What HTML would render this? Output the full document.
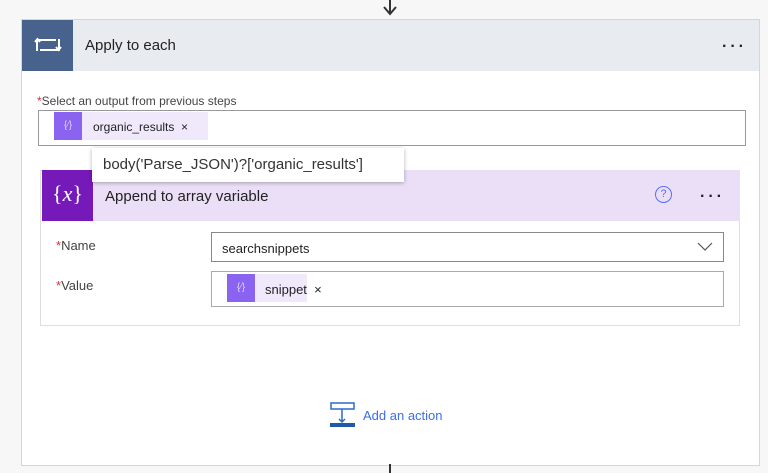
<!DOCTYPE html>
<html><head><style>
body{margin:0;width:768px;height:473px;background:#f7f7f7;font-family:"Liberation Sans",sans-serif;position:relative;overflow:hidden;color:#222}
.a{position:absolute}
</style></head><body>
<div class="a" style="left:389px;top:0;width:2px;height:8px;background:#333"></div>
<svg class="a" style="left:381px;top:0" width="18" height="18"><path d="M3 7 L9 14 L15 7" stroke="#333" stroke-width="2" fill="none"/><path d="M9 0V14" stroke="#333" stroke-width="2"/></svg>
<div class="a" style="left:21px;top:19px;width:737px;height:445px;background:#fff;border:1px solid #d6d6d6"></div>
<div class="a" style="left:22px;top:20px;width:737px;height:51px;background:#e8ebf0"></div>
<div class="a" style="left:22px;top:20px;width:51px;height:51px;background:#46628d"></div>
<svg class="a" style="left:34px;top:34px" width="28" height="22" fill="none" stroke="#fff" stroke-width="2"><path d="M3 17 V6 H22 M1 8 L3.5 5 L6 8 M25 5 V16 H6 M22 13 L24.5 16 L27 13"/></svg>
<div class="a" style="left:85px;top:37px;font-size:15px">Apply to each</div>
<div class="a" style="left:722px;top:38px;font-size:16px;letter-spacing:3px;font-weight:bold">···</div>
<div class="a" style="left:37px;top:94px;font-size:12px;color:#444"><span style="color:#d13438">*</span>Select an output from previous steps</div>
<div class="a" style="left:38px;top:110px;width:706px;height:34px;border:1px solid #999;background:#fff"></div>
<div class="a" style="left:54px;top:112px;width:154px;height:28px;background:#efe9fb"></div>
<div class="a" style="left:54px;top:112px;width:28px;height:28px;background:#8a63f0;color:#d9ccff;font-size:10px;text-align:center;line-height:28px">{∕}</div>
<div class="a" style="left:93px;top:120px;font-size:12px">organic_results&nbsp;&nbsp;×</div>
<div class="a" style="left:40px;top:170px;width:700px;height:156px;background:#fff;border:1px solid #ddd;box-sizing:border-box"></div>
<div class="a" style="left:42px;top:170px;width:698px;height:51px;background:#ebdff8"></div>
<div class="a" style="left:42px;top:170px;width:51px;height:51px;background:#7519b8;color:#fff;font-size:22px;text-align:center;line-height:48px;font-family:'Liberation Serif',serif">{<i>x</i>}</div>
<div class="a" style="left:92px;top:148px;width:312px;height:34px;background:#fff;box-shadow:0 1px 4px rgba(0,0,0,.3)"></div>
<div class="a" style="left:103px;top:156px;font-size:15px;color:#333">body('Parse_JSON')?['organic_results']</div>
<div class="a" style="left:105px;top:188px;font-size:15px">Append to array variable</div>
<div class="a" style="left:655px;top:186px;width:15px;height:15px;border:1.5px solid #5a6ff0;border-radius:50%;color:#5a6ff0;font-size:11px;text-align:center;line-height:15px">?</div>
<div class="a" style="left:700px;top:188px;font-size:16px;letter-spacing:3px;font-weight:bold">···</div>
<div class="a" style="left:56px;top:238px;font-size:13px;color:#444"><span style="color:#d13438">*</span>Name</div>
<div class="a" style="left:56px;top:278px;font-size:13px;color:#444"><span style="color:#d13438">*</span>Value</div>
<div class="a" style="left:211px;top:232px;width:511px;height:28px;border:1px solid #888;background:#fff"></div>
<div class="a" style="left:222px;top:241px;font-size:13px">searchsnippets</div>
<svg class="a" style="left:697px;top:241px" width="16" height="12"><path d="M1 2 L8 9 L15 2" stroke="#555" fill="none" stroke-width="1.2"/></svg>
<div class="a" style="left:211px;top:271px;width:511px;height:34px;border:1px solid #aaa;background:#fff"></div>
<div class="a" style="left:227px;top:274px;width:80px;height:28px;background:#efe9fb"></div>
<div class="a" style="left:227px;top:274px;width:28px;height:28px;background:#8a63f0;color:#d9ccff;font-size:10px;text-align:center;line-height:28px">{∕}</div>
<div class="a" style="left:265px;top:282px;font-size:13px">snippet&nbsp;&nbsp;×</div>
<svg class="a" style="left:330px;top:402px" width="26" height="26"><rect x="1" y="1" width="23" height="6" fill="none" stroke="#2b6cc2" stroke-width="1.5"/><path d="M12 7V20 M9 17 L12 20 L15 17" stroke="#2b6cc2" fill="none" stroke-width="1.5"/><rect x="0" y="21" width="25" height="4" fill="#1f5aa6"/></svg>
<div class="a" style="left:363px;top:408px;font-size:13px;color:#3a6ee8">Add an action</div>
<div class="a" style="left:389px;top:464px;width:2px;height:9px;background:#333"></div>
</body></html>
